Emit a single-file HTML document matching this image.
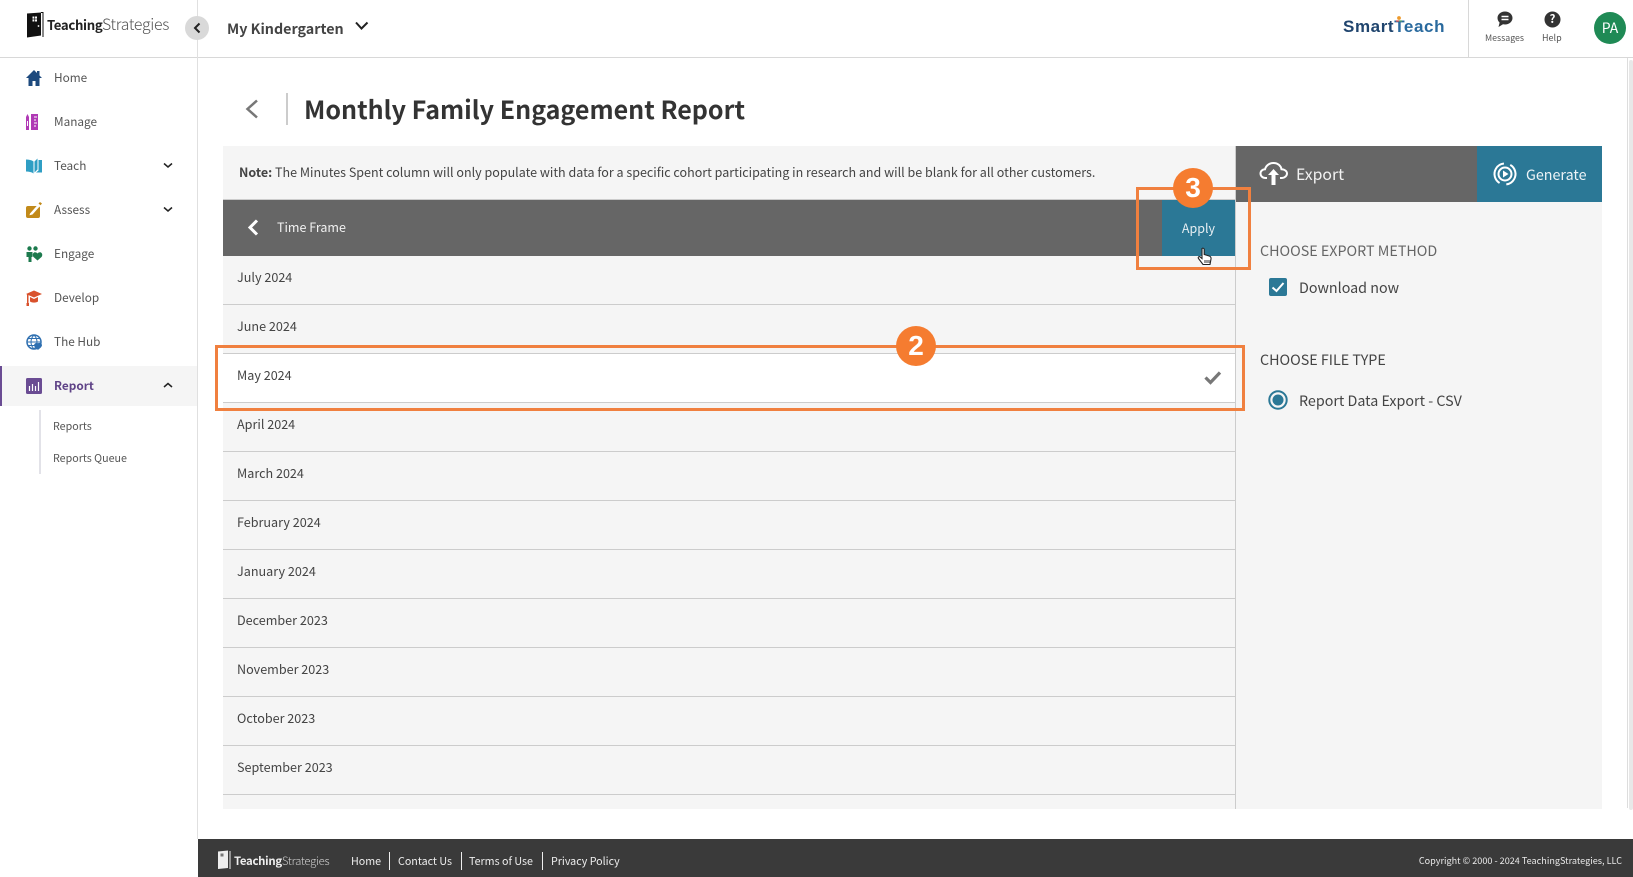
<!DOCTYPE html>
<html lang="en"><head><meta charset="utf-8"><title>Monthly Family Engagement Report</title>
<style>
html,body{margin:0;padding:0;background:#fff}
#p{position:relative;width:1633px;height:877px;overflow:hidden;background:#fff;font-family:"Noto Sans CJK SC","Liberation Sans",sans-serif;color:#444}
.a{position:absolute}
.t{position:absolute;white-space:nowrap;line-height:20px;height:20px}
.n{font-size:11.8px;left:54px;color:#555}
.m{font-size:12.6px;left:237px;color:#444}
.b{position:absolute;left:223px;width:1012px;height:1px;background:#ccc}
.o{position:absolute;border:3px solid #f0803f;box-sizing:border-box}
.c{position:absolute;width:40px;height:40px;border-radius:50%;background:#f57c30;color:#fff;font:bold 28px/40px "Liberation Sans",sans-serif;text-align:center}
.f{font-size:10.7px;color:#eee;top:852px}
svg{position:absolute;overflow:visible}
</style></head><body><div id="p">

<!-- main panels -->
<div class="a" style="left:223px;top:146px;width:1379px;height:663px;background:#f5f5f5"></div>
<div class="a" style="left:223px;top:353px;width:1012px;height:49px;background:#fff"></div>
<div class="a" style="left:223px;top:200px;width:1012px;height:56px;background:#666"></div>
<div class="a" style="left:223px;top:199px;width:1012px;height:1px;background:#ccc"></div>
<div class="a" style="left:1162px;top:200px;width:73px;height:56px;background:#2b7896"></div>
<div class="a" style="left:1236px;top:146px;width:241px;height:56px;background:#666"></div>
<div class="a" style="left:1477px;top:146px;width:125px;height:56px;background:#2b7896"></div>
<div class="a" style="left:1235px;top:146px;width:1px;height:663px;background:#ccc"></div>
<div class="b" style="top:304px"></div><div class="b" style="top:353px"></div><div class="b" style="top:402px"></div><div class="b" style="top:451px"></div><div class="b" style="top:500px"></div><div class="b" style="top:549px"></div><div class="b" style="top:598px"></div><div class="b" style="top:647px"></div><div class="b" style="top:696px"></div><div class="b" style="top:745px"></div><div class="b" style="top:794px"></div>

<!-- header and sidebar lines -->
<div class="a" style="left:0;top:57px;width:1633px;height:1px;background:#d8d8d8"></div>
<div class="a" style="left:197px;top:0;width:1px;height:839px;background:#e0e0e0"></div>
<div class="a" style="left:1468px;top:0;width:1px;height:57px;background:#d8d8d8"></div>
<div class="a" style="left:1627px;top:58px;width:1px;height:750px;background:#ddd"></div>
<div class="a" style="left:1629px;top:60px;width:4px;height:750px;background:#e8e8e8;border-radius:2px"></div>

<!-- logo -->
<svg style="left:0;top:0" width="200" height="57"><path d="M27 13.500 41 12.500V35.500L27 37.500z" fill="#111"/><path d="M43 12v25" stroke="#111" stroke-width="1"/><path d="M41 12.500h2" stroke="#111"/><rect x="32.500" y="16.500" width="4.500" height="5" fill="#fff"/><path d="M34.700 16.500v5M32.500 19h4.500" stroke="#111" stroke-width=".7"/><circle cx="38.500" cy="26" r=".9" fill="#fff"/></svg>
<div class="t" style="left:47px;top:15px;font-size:13.2px;font-weight:700;letter-spacing:-.35px;color:#222">Teaching</div>
<div class="t" style="left:102px;top:14px;font-size:15.8px;font-weight:300;letter-spacing:-.3px;color:#555">Strategies</div>
<svg style="left:185px;top:16px" width="24" height="24"><circle cx="12" cy="12" r="12" fill="#d9d9d9"/><path d="M14.500 7.500 10 12l4.500 4.500" fill="none" stroke="#222" stroke-width="2"/></svg>
<div class="t" style="left:227px;top:19px;font-size:14.300px;font-weight:700;color:#444">My Kindergarten</div>
<svg style="left:355px;top:21px" width="14" height="10"><path d="M1 1.500 6.500 7.500 12.500 1.500" fill="none" stroke="#222" stroke-width="2"/></svg>

<!-- SmartTeach -->
<div class="t" style="left:1343px;top:16.500px;font:bold 17px/20px 'Liberation Sans',sans-serif;letter-spacing:.6px;color:#20456e;white-space:nowrap">Smart<span style="color:#2a6a9e">Teach</span></div>
<svg style="left:1394px;top:15px" width="12" height="8"><circle cx="5" cy="3" r="1.900" fill="#ee9a2c"/><path d="M2 6h3" stroke="#d9534f" stroke-width="1.300"/><path d="M5 6h3" stroke="#5aa469" stroke-width="1.300"/></svg>

<!-- header right -->
<svg style="left:1497px;top:11px" width="16" height="17"><path d="M8 .5C3.800.5.500 3.300.500 7c0 1.800.8 3.400 2.100 4.600L1.500 16 6 13.300c.7.100 1.300.2 2 .2 4.200 0 7.500-2.900 7.500-6.500S12.200.5 8 .5z" fill="#333"/><path d="M4.500 5.500h7M4.500 8.500h7" stroke="#fff" stroke-width="1.500"/></svg>
<div class="t" style="left:1485px;top:28px;font-size:8.800px;color:#555">Messages</div>
<svg style="left:1544px;top:11px" width="17" height="17"><circle cx="8.500" cy="8.500" r="8" fill="#333"/></svg>
<div class="t" style="left:1544px;top:9px;width:17px;text-align:center;font-size:11.500px;font-weight:700;color:#fff">?</div>
<div class="t" style="left:1542px;top:28px;font-size:9px;color:#555">Help</div>
<div class="a" style="left:1594px;top:12px;width:32px;height:32px;border-radius:50%;background:#1f8a55;color:#fff;font-size:14px;line-height:32px;text-align:center">PA</div>

<!-- sidebar -->
<svg style="left:26px;top:70px" width="16" height="16"><path d="M8 0 0 8H2.500v8H6.500V11h3v5H13.500V8H16L13.500 5.500V1h-2.500v2z" fill="#1e4a7e"/></svg>
<div class="t n" style="top:68px">Home</div>
<svg style="left:26px;top:114px" width="12" height="16"><path d="M0 3 1.500 0 3 3v13H0z" fill="#b03ab5"/><path d="M5 0h7v16H5z" fill="#b03ab5"/><path d="M8 3h3M8 6h2M8 9h3M8 12h2" stroke="#fff"/><path d="M1 7h1v5H1z" fill="#fff"/></svg>
<div class="t n" style="top:112px">Manage</div>
<svg style="left:26px;top:158px" width="16" height="16"><path d="M0 1.500c3 0 5.500.5 7.500 2V15.500c-2-1.500-4.500-2-7.500-2z" fill="#2f9ec4"/><path d="M8.500 3.500c1-1 2-2 3-3v11l-3 3z" fill="#2f9ec4"/><path d="M12.500 2H16v12.500h-6l2.500-2z" fill="#2f9ec4"/></svg>
<div class="t n" style="top:156px">Teach</div>
<svg style="left:26px;top:202px" width="16" height="16"><rect y="4" width="14" height="12" rx="2" fill="#c28a1a"/><path d="M4 11.500 12.500 2l2 1.500-8 9-3 .8z" fill="#fff"/><path d="M12.500 1.500 14 0l2 1.500-1.500 1.800z" fill="#c28a1a"/></svg>
<div class="t n" style="top:200px">Assess</div>
<svg style="left:26px;top:246px" width="16" height="16"><circle cx="3.500" cy="2.500" r="2.200" fill="#1c7a4d"/><circle cx="9.500" cy="2.500" r="2.200" fill="#1c7a4d"/><path d="M.5 6h6v5H5.500v5h-3v-5H.5z" fill="#1c7a4d"/><path d="M7.500 7c1-1 2.500-1 4 .5 1.500-1.500 3-1.500 4-.5s1 2.800 0 4l-4 3.500-4-3.500c-1-1.200-1-3 0-4z" fill="#1c7a4d"/></svg>
<div class="t n" style="top:244px">Engage</div>
<svg style="left:26px;top:290px" width="16" height="16"><path d="M8 .5 16 4 8 7.500 0 4z" fill="#d9512c"/><path d="M4 7v4.500c2.500 1.500 5.500 1.500 8 0V7L8 9z" fill="#d9512c"/><path d="M1 4.500h1.500V13H3v3H.5v-3H1z" fill="#d9512c"/></svg>
<div class="t n" style="top:288px">Develop</div>
<svg style="left:26px;top:334px" width="16" height="16"><circle cx="8" cy="8" r="7" fill="none" stroke="#2e6fb0" stroke-width="1.500"/><path d="M1 8h14M8 1c-4 4-4 10 0 14M8 1c4 4 4 10 0 14M2 4.500h12M2 11.500h12" fill="none" stroke="#2e6fb0"/><path d="M8 11c.8-1.800 2.200-2.500 4-1.800 1.800-.7 3.500 0 4 1.800 0 2-2.500 3.500-4 5-1.500-1.500-4-3-4-5z" fill="#2e6fb0"/></svg>
<div class="t n" style="top:332px">The Hub</div>
<div class="a" style="left:0;top:366px;width:197px;height:40px;background:#f5f5f5"></div>
<div class="a" style="left:0;top:366px;width:2px;height:40px;background:#6a4c93"></div>
<svg style="left:26px;top:378px" width="16" height="16"><rect width="16" height="16" rx="1.500" fill="#6a4c93"/><path d="M3.500 8v5M6.500 6v7M9.500 8v5M12.500 4v9" stroke="#fff" stroke-width="1.200"/></svg>
<div class="t n" style="top:376px;font-weight:700;color:#5f4387">Report</div>
<svg style="left:163px;top:162px" width="10" height="7"><path d="M1 1.500 5 5 9 1.500" fill="none" stroke="#222" stroke-width="1.500"/></svg>
<svg style="left:163px;top:206px" width="10" height="7"><path d="M1 1.500 5 5 9 1.500" fill="none" stroke="#222" stroke-width="1.500"/></svg>
<svg style="left:163px;top:382px" width="10" height="7"><path d="M1 5 5 1.500 9 5" fill="none" stroke="#222" stroke-width="1.500"/></svg>
<div class="a" style="left:39px;top:410px;width:2px;height:64px;background:#e2e2e8"></div>
<div class="t" style="left:53px;top:417px;font-size:10.700px;color:#555">Reports</div>
<div class="t" style="left:53px;top:449px;font-size:10.700px;color:#555">Reports Queue</div>

<!-- title -->
<svg style="left:245px;top:99px" width="14" height="20"><path d="M12 1.500 2.500 10 12 18.500" fill="none" stroke="#777" stroke-width="2.500"/></svg>
<div class="a" style="left:286px;top:93px;width:2px;height:32px;background:#ccc"></div>
<div class="t" style="left:304px;top:92px;height:34px;line-height:34px;font-size:25.050px;font-weight:700;color:#333">Monthly Family Engagement Report</div>
<div class="t" style="left:239px;top:162px;font-size:12.530px;color:#444"><b>Note:</b> The Minutes Spent column will only populate with data for a specific cohort participating in research and will be blank for all other customers.</div>

<!-- time frame bar -->
<svg style="left:247px;top:219px" width="12" height="17"><path d="M10 1.500 3 8.500l7 7" fill="none" stroke="#fff" stroke-width="3"/></svg>
<div class="t" style="left:277px;top:216.500px;font-size:12.500px;color:#f2f2f2">Time Frame</div>
<div class="t" style="left:1162px;top:217.500px;width:73px;text-align:center;font-size:12.500px;color:#e6eef2">Apply</div>

<!-- rows -->
<div class="t m" style="top:266.500px">July 2024</div>
<div class="t m" style="top:315.500px">June 2024</div>
<div class="t m" style="top:364.500px">May 2024</div>
<div class="t m" style="top:413.500px">April 2024</div>
<div class="t m" style="top:462.500px">March 2024</div>
<div class="t m" style="top:511.500px">February 2024</div>
<div class="t m" style="top:560.500px">January 2024</div>
<div class="t m" style="top:609.500px">December 2023</div>
<div class="t m" style="top:658.500px">November 2023</div>
<div class="t m" style="top:707.500px">October 2023</div>
<div class="t m" style="top:756.500px">September 2023</div>
<svg style="left:1204px;top:370px" width="18" height="15"><path d="M1.500 7.500 6.500 12.500 16 2.500" fill="none" stroke="#777" stroke-width="3.200"/></svg>

<!-- export -->
<svg style="left:1259px;top:161px" width="30" height="25"><path d="M8 17H6.500C3.500 17 1.500 14.800 1.500 12.500S3.500 8.300 6 8.300C7 4.300 10.500 2 14.500 2c4.500 0 7.500 3 8 6.300 3 0 5.500 1.800 5.500 4.200S25.500 17 23 17h-2" fill="none" stroke="#fff" stroke-width="2"/><path d="M14.500 8 9 14h3.500v10h4V14H20z" fill="#fff"/></svg>
<div class="t" style="left:1296px;top:164px;font-size:15.800px;color:#f2f2f2">Export</div>
<svg style="left:1492px;top:161px" width="26" height="26"><circle cx="13" cy="13" r="10.500" fill="none" stroke="#fff" stroke-width="2" stroke-dasharray="26 7" transform="rotate(-60 13 13)"/><circle cx="13" cy="13" r="6.500" fill="none" stroke="#fff" stroke-width="2"/><path d="M11 9.500v7l5.500-3.500z" fill="#fff"/></svg>
<div class="t" style="left:1526px;top:165px;font-size:14.300px;color:#eef4f7">Generate</div>
<div class="t" style="left:1260px;top:240.500px;font-size:14.300px;color:#666">CHOOSE EXPORT METHOD</div>
<div class="a" style="left:1269px;top:278px;width:18px;height:18px;border-radius:2px;background:#2b7896"></div>
<svg style="left:1269px;top:278px" width="18" height="18"><path d="M3.500 9.500 7.500 13 14.500 5" fill="none" stroke="#fff" stroke-width="2"/></svg>
<div class="t" style="left:1299px;top:277.500px;font-size:14.300px;color:#444">Download now</div>
<div class="t" style="left:1260px;top:349.500px;font-size:14.300px;color:#444">CHOOSE FILE TYPE</div>
<svg style="left:1268px;top:390px" width="20" height="20"><circle cx="10" cy="10" r="8.700" fill="none" stroke="#2b7896" stroke-width="2"/><circle cx="10" cy="10" r="5.500" fill="#2b7896"/></svg>
<div class="t" style="left:1299px;top:390.500px;font-size:14.300px;color:#444">Report Data Export - CSV</div>

<!-- annotations -->
<div class="o" style="left:215px;top:345px;width:1030px;height:66px"></div>
<div class="c" style="left:896px;top:326px">2</div>
<div class="o" style="left:1136px;top:187px;width:115px;height:83px"></div>
<div class="c" style="left:1173px;top:168px">3</div>
<svg style="left:1197px;top:247px" width="16" height="20"><path d="M5 1.500c1-.8 2.200 0 2.200 1v5l5 1.500c1.500.5 2 1.500 1.800 3l-1 5.500H6l-4.500-6c-.8-1 .3-2.300 1.500-1.700L5 11.500z" fill="#fff" stroke="#222" stroke-width="1.100"/><path d="M8 13v3M10 13v3M12 13v3" stroke="#333"/></svg>

<!-- footer -->
<div class="a" style="left:198px;top:839px;width:1435px;height:38px;background:#3a3a3a"></div>
<svg style="left:217px;top:850px" width="14" height="20"><path d="M1 1.500 11 .5v17.500l-10 1z" fill="#eee"/><path d="M13 1v18" stroke="#eee"/><rect x="3.500" y="3.500" width="3" height="3" fill="#777"/></svg>
<div class="t" style="left:234px;top:851px;font-size:11.400px;letter-spacing:-.3px;color:#eee"><b style="font-weight:700">Teaching</b><span style="color:#ccc;font-weight:300">Strategies</span></div>
<div class="t f" style="left:351px">Home</div>
<div class="a" style="left:389px;top:852px;width:1px;height:18px;background:#eee"></div>
<div class="t f" style="left:398px">Contact Us</div>
<div class="a" style="left:461px;top:852px;width:1px;height:18px;background:#eee"></div>
<div class="t f" style="left:469px">Terms of Use</div>
<div class="a" style="left:542px;top:852px;width:1px;height:18px;background:#eee"></div>
<div class="t f" style="left:551px">Privacy Policy</div>
<div class="t" style="right:11px;top:850px;font-size:9.100px;color:#e8e8e8">Copyright © 2000 - 2024 TeachingStrategies, LLC</div>
</div></body></html>
